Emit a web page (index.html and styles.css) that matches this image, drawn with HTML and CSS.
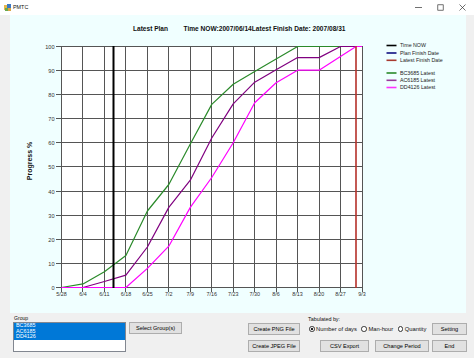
FILE: index.html
```html
<!DOCTYPE html>
<html>
<head>
<meta charset="utf-8">
<title>PMTC</title>
<link rel="stylesheet" href="styles.css">
</head>
<body>
<div class="window">
  <div class="titlebar">
    <svg class="app-icon" width="7" height="7" viewBox="0 0 7 7">
      <rect x="0" y="1" width="4" height="5" fill="#e8b84a"/>
      <rect x="3" y="0" width="4" height="4" fill="#3b78c4"/>
      <rect x="1" y="4" width="3" height="3" fill="#6aa84f"/>
      <rect x="4" y="4" width="3" height="3" fill="#d9a441"/>
    </svg>
    <span class="app-title">PMTC</span>
    <div class="win-controls">
      <span class="wc"><svg width="7" height="7" viewBox="0 0 7 7"><line x1="0" y1="3.5" x2="7" y2="3.5" class="wc-line"/></svg></span>
      <span class="wc"><svg width="7" height="7" viewBox="0 0 7 7"><rect x="0.8" y="0.8" width="5.4" height="5.4" class="wc-line" fill="none"/></svg></span>
      <span class="wc"><svg width="7" height="7" viewBox="0 0 7 7"><line x1="0.5" y1="0.5" x2="6.5" y2="6.5" class="wc-line"/><line x1="6.5" y1="0.5" x2="0.5" y2="6.5" class="wc-line"/></svg></span>
    </div>
  </div>
  <div class="client">
    <div class="chart-panel">
      <svg class="chart" width="456" height="298" viewBox="10 15 456 298">
        <text class="chart-title" x="133" y="31.3" textLength="35" lengthAdjust="spacingAndGlyphs">Latest Plan</text>
        <text class="chart-title" x="183.5" y="31.3" textLength="162" lengthAdjust="spacingAndGlyphs">Time NOW:2007/06/14Latest Finish Date: 2007/08/31</text>

        <rect class="plot-bg" x="61.5" y="46.5" width="301" height="241"/>

        <g class="grid">
          <line x1="56" y1="287.5" x2="362.5" y2="287.5"/>
          <line x1="56" y1="263.5" x2="362.5" y2="263.5"/>
          <line x1="56" y1="239.5" x2="362.5" y2="239.5"/>
          <line x1="56" y1="215.5" x2="362.5" y2="215.5"/>
          <line x1="56" y1="191.5" x2="362.5" y2="191.5"/>
          <line x1="56" y1="166.5" x2="362.5" y2="166.5"/>
          <line x1="56" y1="142.5" x2="362.5" y2="142.5"/>
          <line x1="56" y1="118.5" x2="362.5" y2="118.5"/>
          <line x1="56" y1="94.5" x2="362.5" y2="94.5"/>
          <line x1="56" y1="70.5" x2="362.5" y2="70.5"/>
          <line x1="56" y1="46.5" x2="362.5" y2="46.5"/>

          <line x1="61.5" y1="46.5" x2="61.5" y2="291.5"/>
          <line x1="82.5" y1="46.5" x2="82.5" y2="291.5"/>
          <line x1="104.5" y1="46.5" x2="104.5" y2="291.5"/>
          <line x1="125.5" y1="46.5" x2="125.5" y2="291.5"/>
          <line x1="147.5" y1="46.5" x2="147.5" y2="291.5"/>
          <line x1="168.5" y1="46.5" x2="168.5" y2="291.5"/>
          <line x1="190.5" y1="46.5" x2="190.5" y2="291.5"/>
          <line x1="211.5" y1="46.5" x2="211.5" y2="291.5"/>
          <line x1="233.5" y1="46.5" x2="233.5" y2="291.5"/>
          <line x1="254.5" y1="46.5" x2="254.5" y2="291.5"/>
          <line x1="276.5" y1="46.5" x2="276.5" y2="291.5"/>
          <line x1="297.5" y1="46.5" x2="297.5" y2="291.5"/>
          <line x1="319.5" y1="46.5" x2="319.5" y2="291.5"/>
          <line x1="340.5" y1="46.5" x2="340.5" y2="291.5"/>
          <line x1="362.5" y1="46.5" x2="362.5" y2="291.5"/>
        </g>

        <g class="y-labels">
          <text x="54.5" y="289.6">0</text>
          <text x="54.5" y="265.6">10</text>
          <text x="54.5" y="241.6">20</text>
          <text x="54.5" y="217.6">30</text>
          <text x="54.5" y="193.6">40</text>
          <text x="54.5" y="168.6">50</text>
          <text x="54.5" y="144.6">60</text>
          <text x="54.5" y="120.6">70</text>
          <text x="54.5" y="96.6">80</text>
          <text x="54.5" y="72.6">90</text>
          <text x="54.5" y="48.6">100</text>
        </g>

        <g class="x-labels">
          <text x="61.5" y="296">5/28</text>
          <text x="83" y="296">6/4</text>
          <text x="104.4" y="296">6/11</text>
          <text x="125.9" y="296">6/18</text>
          <text x="147.4" y="296">6/25</text>
          <text x="168.8" y="296">7/2</text>
          <text x="190.3" y="296">7/9</text>
          <text x="211.75" y="296">7/16</text>
          <text x="233.2" y="296">7/23</text>
          <text x="254.7" y="296">7/30</text>
          <text x="276.1" y="296">8/6</text>
          <text x="297.6" y="296">8/13</text>
          <text x="319.1" y="296">8/20</text>
          <text x="340.5" y="296">8/27</text>
          <text x="362" y="296">9/3</text>
        </g>

        <text class="axis-title" transform="translate(32,161) rotate(-90)">Progress %</text>

        <polyline class="s-green" points="61.5,287.5 83,283.9 104.4,271.8 125.9,255.4 147.4,211 168.8,184.5 190.3,144 211.75,104.4 233.2,84.2 254.7,71.6 276.1,59.1 297.6,46.5 362,46.5"/>
        <polyline class="s-purple" points="61.5,287.5 83,287.5 104.4,281.5 125.9,275.2 147.4,247 168.8,207.4 190.3,180.2 211.75,138 233.2,103.9 254.7,82.2 276.1,69.7 297.6,57.6 319.1,57.6 340.5,46.5 362,46.5"/>
        <polyline class="s-magenta" points="61.5,287.5 125.9,287.5 147.4,268.4 168.8,246.2 190.3,207.4 211.75,177.5 233.2,142.8 254.7,102.7 276.1,82.7 297.6,70.2 319.1,70.2 356,46.5 362,46.5"/>

        <line class="now-line" x1="113.5" y1="46" x2="113.5" y2="288"/>
        <line class="finish-line" x1="356" y1="46" x2="356" y2="288"/>

        <g class="legend">
          <line class="lg-now" x1="386.5" y1="45.5" x2="396.5" y2="45.5"/>
          <text x="400" y="47.3">Time NOW</text>
          <line class="lg-plan" x1="386.5" y1="53" x2="396.5" y2="53"/>
          <text x="400" y="54.7">Plan Finish Date</text>
          <line class="lg-latest" x1="386.5" y1="60.3" x2="396.5" y2="60.3"/>
          <text x="400" y="62">Latest Finish Date</text>
          <line class="lg-green" x1="386.5" y1="73" x2="396.5" y2="73"/>
          <text x="400" y="74.7">BC3685 Latest</text>
          <line class="lg-purple" x1="386.5" y1="80.3" x2="396.5" y2="80.3"/>
          <text x="400" y="82">AC6185 Latest</text>
          <line class="lg-magenta" x1="386.5" y1="87.5" x2="396.5" y2="87.5"/>
          <text x="400" y="89.2">DD4126 Latest</text>
        </g>
      </svg>
    </div>

    <div class="bottom">
      <div class="group">
        <div class="group-label">Group</div>
        <div class="group-row">
          <div class="listbox">
            <div class="lb-item">BC3685</div>
            <div class="lb-item">AC6185</div>
            <div class="lb-item">DD4126</div>
          </div>
          <button class="btn btn-select">Select Group(s)</button>
        </div>
      </div>
      <div class="actions">
        <button class="btn btn-row1">Create PNG File</button>
        <div class="tab-box">
          <div class="tab-label">Tabulated by:</div>
          <div class="radios">
            <span class="radio"><span class="radio-dot checked"></span>Number of days</span>
            <span class="radio"><span class="radio-dot"></span>Man-hour</span>
            <span class="radio"><span class="radio-dot"></span>Quantity</span>
          </div>
        </div>
        <button class="btn btn-row1">Setting</button>
        <button class="btn">Create JPEG File</button>
        <div class="mid-buttons">
          <button class="btn btn-csv">CSV Export</button>
          <button class="btn btn-period">Change Period</button>
        </div>
        <button class="btn">End</button>
      </div>
    </div>
  </div>
</div>
</body>
</html>
```
FILE: styles.css
```css
html, body {
  margin: 0;
  padding: 0;
}

body {
  width: 474px;
  height: 358px;
  overflow: hidden;
  background: #f0f0f0;
  font-family: "Liberation Sans", Arial, sans-serif;
  color: #000;
}

.window {
  width: 474px;
  height: 358px;
  display: flex;
  flex-direction: column;
}

/* ---------- title bar ---------- */
.titlebar {
  height: 15px;
  flex: none;
  background: #ffffff;
  display: flex;
  align-items: center;
  padding-left: 4px;
}

.app-icon {
  display: block;
  margin-right: 2px;
}

.app-title {
  font-size: 5.4px;
  line-height: 15px;
  color: #111;
}

.win-controls {
  margin-left: auto;
  margin-right: 1px;
  display: flex;
}

.wc {
  width: 22px;
  height: 15px;
  display: flex;
  align-items: center;
  justify-content: center;
}

.wc svg {
  display: block;
}

.wc-line {
  stroke: #333;
  stroke-width: 0.7;
}

/* ---------- client ---------- */
.client {
  flex: 1;
  display: flex;
  flex-direction: column;
}

.chart-panel {
  margin-left: 10px;
  width: 456px;
  height: 298px;
  flex: none;
  background: #f0ffff;
}

.chart {
  display: block;
}

.chart-title {
  font-size: 6.5px;
  font-weight: bold;
  fill: #111;
}

.plot-bg {
  fill: #ffffff;
}

.grid line {
  stroke: #555;
  stroke-width: 1;
  shape-rendering: crispEdges;
}

.y-labels text {
  font-size: 5.6px;
  fill: #333;
  text-anchor: end;
}

.x-labels text {
  font-size: 5.4px;
  fill: #333;
  text-anchor: middle;
}

.axis-title {
  font-size: 7px;
  font-weight: bold;
  fill: #111;
  text-anchor: middle;
}

.s-green,
.s-purple,
.s-magenta {
  fill: none;
  stroke-width: 1.2;
  stroke-linejoin: round;
}

.s-green { stroke: #2a8a2a; }
.s-purple { stroke: #800080; }
.s-magenta { stroke: #ff00ff; }

.now-line {
  stroke: #000;
  stroke-width: 2;
}

.finish-line {
  stroke: #b5302a;
  stroke-width: 1.6;
}

.legend line {
  stroke-width: 1.6;
}

.legend text {
  font-size: 5.3px;
  fill: #222;
}

.lg-now { stroke: #000; }
.lg-plan { stroke: #101080; }
.lg-latest { stroke: #a83a30; }
.lg-green { stroke: #2a8a2a; }
.lg-purple { stroke: #9a3a9a; }
.lg-magenta { stroke: #ff33ff; }

/* ---------- bottom controls ---------- */
.bottom {
  height: 45px;
  box-sizing: border-box;
  padding: 2px 0 0 13px;
  display: flex;
  align-items: flex-start;
}

.group {
  display: flex;
  flex-direction: column;
}

.group-label {
  height: 7px;
  line-height: 7px;
  font-size: 5.1px;
  padding-left: 1px;
  color: #111;
}

.group-row {
  display: flex;
  align-items: flex-start;
  gap: 3px;
}

.listbox {
  width: 113px;
  height: 30px;
  box-sizing: border-box;
  border: 1px solid #828790;
  background: #ffffff;
  display: flex;
  flex-direction: column;
}

.lb-item {
  height: 5.7px;
  line-height: 5.7px;
  font-size: 5.4px;
  padding-left: 2px;
  background: #0078d7;
  color: #ffffff;
}

.btn {
  box-sizing: border-box;
  height: 12px;
  margin: 0;
  padding: 0;
  border: 1px solid #adadad;
  background: #e1e1e1;
  font-family: "Liberation Sans", Arial, sans-serif;
  font-size: 5.6px;
  color: #000;
  display: flex;
  align-items: center;
  justify-content: center;
  white-space: nowrap;
}

.btn-select {
  width: 53px;
}

.actions {
  margin-left: 66px;
  display: grid;
  grid-template-columns: 52px 126px 35px;
  grid-template-rows: 21px 12px;
  column-gap: 3px;
  row-gap: 4px;
}

.btn-row1 {
  align-self: end;
  margin-bottom: 1px;
}

.tab-box {
  display: flex;
  flex-direction: column;
  padding: 1px 0 0 5px;
}

.tab-label {
  height: 7px;
  line-height: 7px;
  font-size: 5.4px;
  color: #111;
}

.radios {
  height: 12px;
  display: flex;
  align-items: center;
  padding-left: 1px;
  white-space: nowrap;
}

.radio {
  display: flex;
  align-items: center;
  font-size: 5.8px;
  margin-right: 4.5px;
  color: #111;
}

.radio-dot {
  width: 5.5px;
  height: 5.5px;
  box-sizing: border-box;
  border: 0.6px solid #333;
  border-radius: 50%;
  background: #fff;
  margin-right: 1.5px;
  flex: none;
}

.radio-dot.checked {
  background: radial-gradient(circle, #222 0 1.3px, #fff 1.6px);
}

.mid-buttons {
  display: flex;
  justify-content: flex-end;
  gap: 6px;
}

.btn-csv {
  width: 49px;
}

.btn-period {
  width: 54px;
}
```
